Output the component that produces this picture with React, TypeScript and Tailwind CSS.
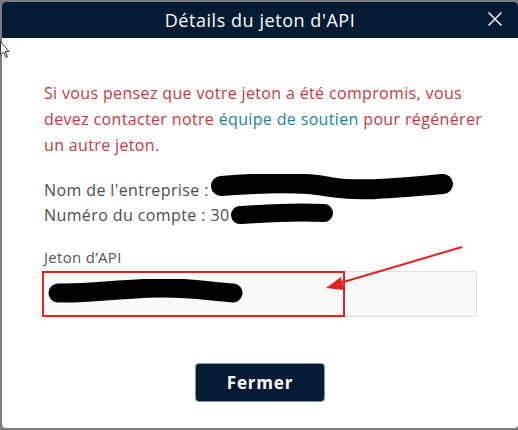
export default function App() {
  return (
    <div className="relative w-[518px] h-[430px] bg-[#7d7d7d] pt-[2px] pl-[2px] pb-[2px] overflow-hidden" style={{ fontFamily: '"Open Sans", Lato, sans-serif' }}>
      <div className="flex flex-col h-full bg-white rounded-[4px] overflow-hidden">
        {/* Header */}
        <div className="relative flex items-center justify-center h-[36px] bg-[#031b33] shrink-0">
          <h1 className="text-[18px] tracking-[0.55px] text-white">Détails du jeton d'API</h1>
          <button className="absolute right-[15px] top-[9px] text-[#e4e4e4]">
            <svg width="16" height="16" viewBox="0 0 16 16" fill="none" stroke="currentColor" strokeWidth="1.7">
              <path d="M1.5 1.5 L14.5 14.5 M14.5 1.5 L1.5 14.5" />
            </svg>
          </button>
        </div>

        {/* Body */}
        <div className="flex flex-col px-[42px] pt-[42px]">
          <p className="w-[445px] text-[16px] leading-[26px] tracking-[0.35px] text-[#c8383b]">
            Si vous pensez que votre jeton a été compromis, vous devez contacter notre{' '}
            <a className="text-[#1c7f9c]">équipe de soutien</a> pour régénérer un autre jeton.
          </p>

          <div className="mt-[20px] flex flex-col text-[16px] leading-[25px] tracking-[0.4px] text-[#4d4d4d]">
            <div className="relative">
              Nom de l'entreprise :
              <svg className="absolute left-[166px] top-[-4px]" width="245" height="28" viewBox="0 0 245 28">
                <path d="M11 12 C 50 9, 90 7, 120 13 C 150 18, 185 14, 233 10" stroke="#000" strokeWidth="20" strokeLinecap="round" fill="none" />
              </svg>
            </div>
            <div className="relative">
              Numéro du compte : 30
              <svg className="absolute left-[186px] top-[-1px]" width="106" height="24" viewBox="0 0 106 24">
                <path d="M10 13 C 30 12, 60 9, 94 11" stroke="#000" strokeWidth="18" strokeLinecap="round" fill="none" />
              </svg>
            </div>
          </div>

          <label className="mt-[19px] text-[15px] leading-[20px] tracking-[0.3px] text-[#555]">Jeton d’API</label>
          <div className="relative mt-[4px] -ml-[2px] h-[46px] w-[435px] bg-[#f9f9f9] border border-[#dedede] rounded-[3px]">
            <div className="absolute left-[-1px] top-[-1px] w-[303px] h-[46px] border-2 border-[#e3211f]" />
            <svg className="absolute left-[4px] top-[7px]" width="200" height="26" viewBox="0 0 200 26">
              <path d="M11 14 C 40 15, 70 10, 110 9 C 140 8, 160 12, 186 14" stroke="#000" strokeWidth="19" strokeLinecap="round" fill="none" />
            </svg>
          </div>

          <div className="flex justify-center mt-[46px]">
            <button className="w-[130px] h-[39px] rounded-[4px] bg-[#061c33] border border-[#8896a6] text-white text-[17px] tracking-[0.8px] font-bold">
              Fermer
            </button>
          </div>
        </div>
      </div>

      {/* Annotation arrow */}
      <svg className="absolute left-0 top-0 pointer-events-none" width="518" height="430">
        <line x1="462" y1="247" x2="340" y2="283" stroke="#e3211f" strokeWidth="2" />
        <path d="M326 288 L341 277 L344 290 Z" fill="#e3211f" />
      </svg>

      {/* Mouse pointer */}
      <svg className="absolute left-0 top-[41px]" width="10" height="18" viewBox="0 0 10 18">
        <path d="M0.5 0.5 L0.5 14 L3.5 11 L6 16.5 L7.5 15.8 L5.2 10.5 L9 10.5 Z" fill="#fff" stroke="#333" strokeWidth="1" />
      </svg>
    </div>
  );
}
